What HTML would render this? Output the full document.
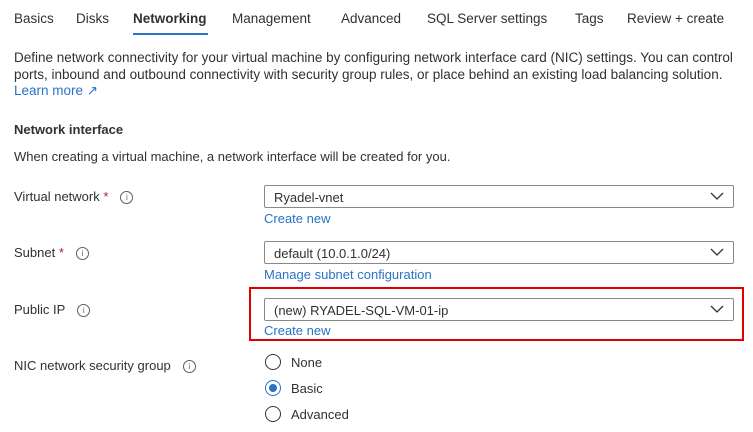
<!DOCTYPE html>
<html><head><style>
body{margin:0;width:753px;height:432px;background:#fff;font-family:"Liberation Sans",sans-serif;font-size:13px;color:#323130;position:relative;overflow:hidden}
.a{position:absolute;white-space:nowrap}
.tab{position:absolute;top:11px;font-size:13.5px}
.link{color:#2a73c5}
.dd{position:absolute;left:264px;width:470px;height:23px;border:1px solid #8a8886;border-radius:2px;box-sizing:border-box}
.dd span{position:absolute;left:9px;top:4px}
.dd svg{position:absolute;right:9px;top:6px}
.info{display:inline-block;width:11px;height:11px;border:1px solid #605e5c;border-radius:50%;font-size:8px;text-align:center;line-height:11px;vertical-align:1px;margin-left:12px;color:#605e5c}
.req{color:#a4262c}
.r{position:absolute;left:265px;width:16px;height:16px;border:1px solid #323130;border-radius:50%;box-sizing:border-box}
</style></head><body>
<div class="tab" style="left:14px">Basics</div>
<div class="tab" style="left:76px">Disks</div>
<div class="tab" style="left:133px;font-weight:bold">Networking</div>
<div class="a" style="left:133px;top:33px;width:75px;height:2px;background:#2a73c5"></div>
<div class="tab" style="left:232px">Management</div>
<div class="tab" style="left:341px">Advanced</div>
<div class="tab" style="left:427px">SQL Server settings</div>
<div class="tab" style="left:575px">Tags</div>
<div class="tab" style="left:627px">Review + create</div>
<div class="a" style="left:14px;top:50px;line-height:16.5px;font-size:13.5px">Define network connectivity for your virtual machine by configuring network interface card (NIC) settings. You can control<br>ports, inbound and outbound connectivity with security group rules, or place behind an existing load balancing solution.<br><span class="link">Learn more ↗</span></div>
<div class="a" style="left:14px;top:122px;font-weight:bold">Network interface</div>
<div class="a" style="left:14px;top:149px">When creating a virtual machine, a network interface will be created for you.</div>
<div class="a" style="left:14px;top:189px">Virtual network <span class="req">*</span><span class="info">i</span></div>
<div class="dd" style="top:185px"><span>Ryadel-vnet</span><svg width="14" height="9"><path d="M1 1l6 6 6-6" fill="none" stroke="#323130" stroke-width="1.3"/></svg></div>
<div class="a link" style="left:264px;top:211px">Create new</div>
<div class="a" style="left:14px;top:245px">Subnet <span class="req">*</span><span class="info">i</span></div>
<div class="dd" style="top:241px"><span>default (10.0.1.0/24)</span><svg width="14" height="9"><path d="M1 1l6 6 6-6" fill="none" stroke="#323130" stroke-width="1.3"/></svg></div>
<div class="a link" style="left:264px;top:267px">Manage subnet configuration</div>
<div class="a" style="left:14px;top:302px">Public IP<span class="info">i</span></div>
<div class="a" style="left:249px;top:287px;width:495px;height:54px;border:2px solid #e00000;box-sizing:border-box"></div>
<div class="dd" style="top:298px"><span>(new) RYADEL-SQL-VM-01-ip</span><svg width="14" height="9"><path d="M1 1l6 6 6-6" fill="none" stroke="#323130" stroke-width="1.3"/></svg></div>
<div class="a link" style="left:264px;top:323px">Create new</div>
<div class="a" style="left:14px;top:358px">NIC network security group<span class="info">i</span></div>
<div class="r" style="top:354px"></div><div class="a" style="left:291px;top:355px">None</div>
<div class="r" style="top:380px;border-color:#2a73c5"><div style="position:absolute;left:3px;top:3px;width:8px;height:8px;border-radius:50%;background:#2a73c5"></div></div><div class="a" style="left:291px;top:381px">Basic</div>
<div class="r" style="top:406px"></div><div class="a" style="left:291px;top:407px">Advanced</div>
</body></html>
